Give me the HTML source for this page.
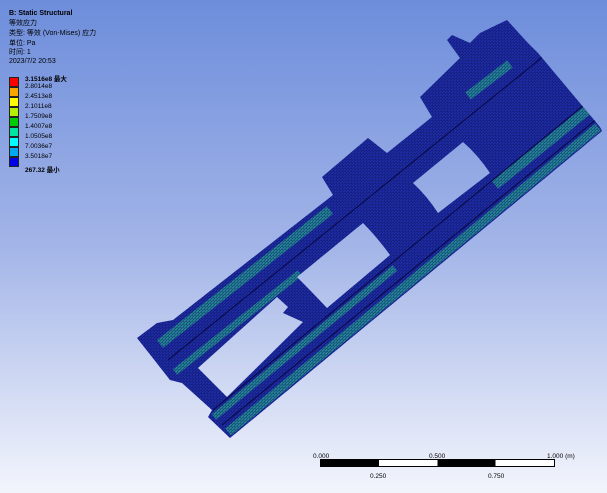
<!DOCTYPE html>
<html><head><meta charset="utf-8"><style>
body{margin:0;width:607px;height:493px;overflow:hidden;background:linear-gradient(#6d8ddb 0%,#a3b5e8 50%,#f3f5fc 100%);font-family:"Liberation Sans","Noto Sans CJK SC",sans-serif;position:relative}
.t{position:absolute;left:9px;font-size:7px;color:#000;line-height:10px}
.leg{position:absolute;left:9px;top:77px}
.c{position:absolute;left:0;width:10px;height:10px;border:0.5px solid #222;box-sizing:border-box}
.l{position:absolute;left:16px;font-size:6.5px;color:#000;white-space:nowrap}
.s{position:absolute;font-size:6.5px;color:#000}
</style></head><body>
<div class="t" style="top:9px;font-weight:bold">B: Static Structural</div>
<div class="t" style="top:19px">等效应力</div>
<div class="t" style="top:29px">类型: 等效 (Von-Mises) 应力</div>
<div class="t" style="top:39px">单位: Pa</div>
<div class="t" style="top:48px">时间: 1</div>
<div class="t" style="top:57px">2023/7/2 20:53</div>
<div class="leg">
<div class="c" style="top:0;background:#f00"></div>
<div class="c" style="top:10px;background:#f9a500"></div>
<div class="c" style="top:20px;background:#ff0"></div>
<div class="c" style="top:30px;background:#b5f000"></div>
<div class="c" style="top:40px;background:#0c0"></div>
<div class="c" style="top:50px;background:#00e6a0"></div>
<div class="c" style="top:60px;background:#0ff"></div>
<div class="c" style="top:70px;background:#00a8f0"></div>
<div class="c" style="top:80px;background:#0000e6"></div>
<div class="l" style="top:-4px;font-weight:bold">3.1516e8 最大</div>
<div class="l" style="top:6px">2.8014e8</div>
<div class="l" style="top:16px">2.4513e8</div>
<div class="l" style="top:26px">2.1011e8</div>
<div class="l" style="top:36px">1.7509e8</div>
<div class="l" style="top:46px">1.4007e8</div>
<div class="l" style="top:56px">1.0505e8</div>
<div class="l" style="top:66px">7.0036e7</div>
<div class="l" style="top:76px">3.5018e7</div>
<div class="l" style="top:87px;font-weight:bold">267.32 最小</div>
</div>
<svg width="607" height="493" style="position:absolute;left:0;top:0">
<defs>
<pattern id="m" width="3" height="3" patternUnits="userSpaceOnUse"><path d="M0 3L3 0M0 0L1.5 1.5" stroke="#060838" stroke-width="0.6" opacity="0.55"/></pattern>
<linearGradient id="bg" gradientUnits="userSpaceOnUse" x1="0" y1="0" x2="0" y2="493"><stop offset="0" stop-color="#6d8ddb"/><stop offset="0.5" stop-color="#a3b5e8"/><stop offset="1" stop-color="#f3f5fc"/></linearGradient>
<clipPath id="cb"><polygon points="230,438 602,131 600,127 538,53 527,42 507,20 480,33 470,43 452,35 447,40 460,58 420,97 432,117 387,153 368,138 322,177 333,195 173,320 157,323 137,338 152,357 170,380 182,383 212,410 208,417"/></clipPath>
</defs>
<polygon fill="#1e2ca8" points="230,438 602,131 600,127 538,53 527,42 507,20 480,33 470,43 452,35 447,40 460,58 420,97 432,117 387,153 368,138 322,177 333,195 173,320 157,323 137,338 152,357 170,380 182,383 212,410 208,417"/>
<g clip-path="url(#cb)">
<g stroke="#24849c" fill="none">
<path d="M228,432 L598,127" stroke-width="9"/>
<path d="M214,417 L395,268" stroke-width="7"/>
<path d="M495,185 L590,108" stroke-width="10"/>
<path d="M160,344 L330,210" stroke-width="10"/>
<path d="M175,372 L300,273" stroke-width="7"/>
<path d="M468,96 L510,64" stroke-width="9"/>
</g>
<g stroke="#0a0d55" fill="none" stroke-width="1.2">
<path d="M222,425 L598,118"/>
<path d="M168,360 L545,55"/>
<path d="M213,410 L590,100"/>
</g>
<rect width="607" height="493" fill="url(#m)"/>
</g>
<g fill="url(#bg)">
<polygon points="198,368 277,297 288,307 283,313 303,322 227,397"/>
<path d="M297,277 L363,223 Q376,236 390,255 L327,308 Q310,290 297,277Z"/>
<path d="M413,183 L463,142 Q478,155 490,173 L438,213 Q427,196 413,183Z"/>
</g>
<polygon fill="#1e2ca8" points="277,297 290,285 325,315 313,325"/>
<polygon fill="url(#m)" points="277,297 290,285 325,315 313,325"/>
</svg>
<div class="s" style="left:313px;top:453px">0.000</div>
<div class="s" style="left:429px;top:453px">0.500</div>
<div class="s" style="left:547px;top:453px">1.000 (m)</div>
<div style="position:absolute;left:320px;top:459px;width:235px;height:8px;border:0.5px solid #000;box-sizing:border-box;background:linear-gradient(90deg,#000 0 25%,#fff 25% 50%,#000 50% 75%,#fff 75%)"></div>
<div class="s" style="left:370px;top:473px">0.250</div>
<div class="s" style="left:488px;top:473px">0.750</div>
</body></html>
